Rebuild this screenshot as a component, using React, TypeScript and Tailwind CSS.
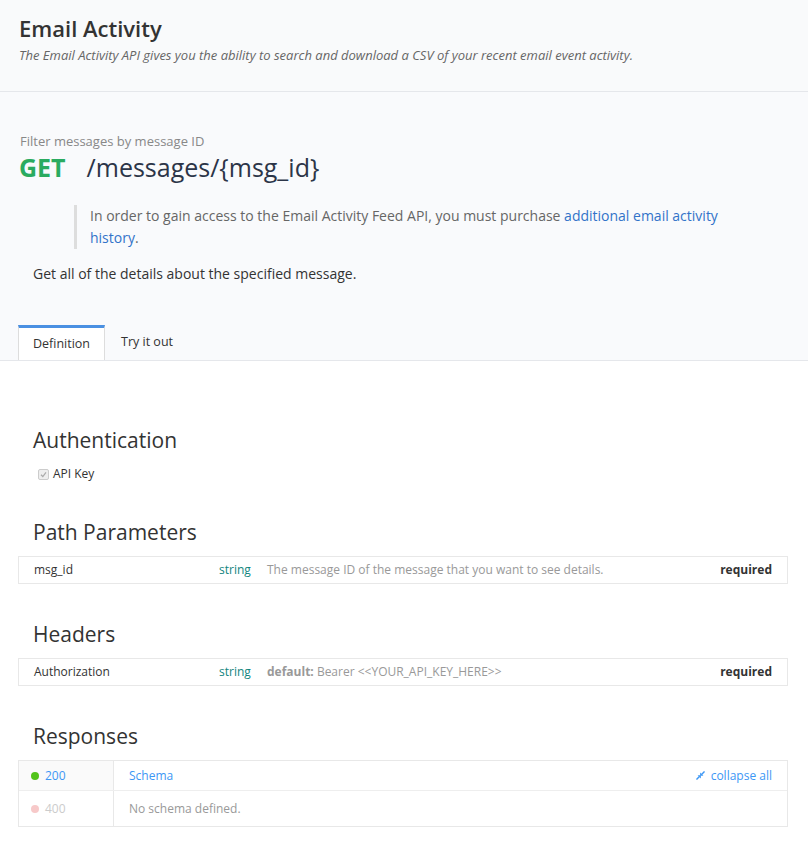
import React from "react";

const FONT = { fontFamily: '"Open Sans", "Noto Sans", sans-serif' };

function CollapseIcon() {
  return (
    <svg width="9" height="9" viewBox="0 0 10 10" className="inline-block">
      <path d="M9.5 0.5 L6.2 3.8" stroke="#3d97f5" strokeWidth="1.6" />
      <path d="M4.6 1.8 L4.6 5.4 L8.2 5.4 Z" fill="#3d97f5" />
      <path d="M0.5 9.5 L3.8 6.2" stroke="#3d97f5" strokeWidth="1.6" />
      <path d="M5.4 8.2 L5.4 4.6 L1.8 4.6 Z" fill="#3d97f5" />
    </svg>
  );
}

function ParamRow({ name, type, children }: { name: string; type: string; children: React.ReactNode }) {
  return (
    <div className="mr-[20px] ml-[18px] flex h-[28px] items-center border border-[#e8e8e8] pr-[15px] pl-[15px] text-[12px]">
      <span className="w-[185px] text-[#333]">{name}</span>
      <span className="w-[48px] text-[#12857e]">{type}</span>
      <span className="flex-1 text-[#999]">{children}</span>
      <span className="font-bold text-[#333]">required</span>
    </div>
  );
}

function SectionTitle({ children }: { children: React.ReactNode }) {
  return <h2 className="px-[33px] text-[21px] leading-[30px] font-normal text-[#333]">{children}</h2>;
}

export default function App() {
  return (
    <div className="min-h-[846px] bg-white" style={FONT}>
      <header className="h-[92px] border-b border-[#e5e7eb] bg-[#f9fafb] px-[19px] pt-[13px]">
        <h1 className="text-[22px] leading-[30px] font-semibold text-[#333]">Email Activity</h1>
        <p className="mt-[3px] text-[13px] leading-[18px] italic text-[#666]">
          The Email Activity API gives you the ability to search and download a CSV of your recent email event activity.
        </p>
      </header>

      <section className="border-b border-[#e5e7eb] bg-[#f9fafc] pt-[40px]">
        <div className="px-[19px]">
          <p className="pl-[1px] text-[13px] leading-[18px] text-[#888]">Filter messages by message ID</p>
          <div className="mt-[1px] flex items-center text-[25px] leading-[32px]">
            <span className="font-bold text-[#2aab60]">GET</span>
            <span className="ml-[21px] text-[#2c3548]">/messages/{"{msg_id}"}</span>
          </div>
        </div>
        <div className="px-[33px]">
          <blockquote className="mt-[22px] mr-[40px] ml-[41px] border-l-[3px] border-[#ddd] pl-[13px] text-[14px] leading-[22px] text-[#666]">
            In order to gain access to the Email Activity Feed API, you must purchase{" "}
            <a className="text-[#3273c9]">additional email activity history</a>.
          </blockquote>
          <p className="mt-[14px] text-[14px] leading-[22px] text-[#333]">Get all of the details about the specified message.</p>
        </div>
        <div className="mt-[40px] flex px-[18px] text-[12.5px]">
          <div className="-mb-px flex h-[35px] w-[87px] items-center justify-center border-x border-t-[3px] border-[#ddd] border-t-[#4a90e2] bg-white text-[#333]">
            Definition
          </div>
          <div className="flex h-[35px] items-center pl-[16px] text-[#333]">Try it out</div>
        </div>
      </section>

      <main className="pt-[64px] pb-[20px]">
        <SectionTitle>Authentication</SectionTitle>
        <label className="mt-[10px] flex items-center px-[38px] text-[12px] leading-[18px] text-[#333]">
          <span className="mr-[4px] flex h-[11px] w-[11px] items-center justify-center rounded-[2px] border border-[#ccc] bg-[#eee]">
            <svg width="7" height="7" viewBox="0 0 7 7">
              <path d="M1 3.8 L2.8 5.5 L6 1.3" stroke="#aaa" strokeWidth="1.2" fill="none" />
            </svg>
          </span>
          API Key
        </label>

        <div className="mt-[34px]">
          <SectionTitle>Path Parameters</SectionTitle>
          <div className="mt-[9px]">
            <ParamRow name="msg_id" type="string">
              The message ID of the message that you want to see details.
            </ParamRow>
          </div>
        </div>

        <div className="mt-[35px]">
          <SectionTitle>Headers</SectionTitle>
          <div className="mt-[9px]">
            <ParamRow name="Authorization" type="string">
              <span className="font-bold">default: </span>Bearer &lt;&lt;YOUR_API_KEY_HERE&gt;&gt;
            </ParamRow>
          </div>
        </div>

        <div className="mt-[35px]">
          <SectionTitle>Responses</SectionTitle>
          <div className="mt-[9px] mr-[20px] ml-[18px] border border-[#e8e8e8] text-[12px]">
            <div className="flex h-[30px] border-b border-[#eee]">
              <div className="flex w-[95px] items-center border-r border-[#e8e8e8] bg-[#fafafa] pl-[12px]">
                <span className="mr-[6px] h-[8px] w-[8px] rounded-full bg-[#52c41a]" />
                <span className="text-[#3d97f5]">200</span>
              </div>
              <div className="flex flex-1 items-center justify-between pr-[15px] pl-[15px]">
                <span className="text-[#3d97f5]">Schema</span>
                <span className="flex items-center gap-[6px] text-[#3d97f5]">
                  <CollapseIcon />
                  collapse all
                </span>
              </div>
            </div>
            <div className="flex h-[35px]">
              <div className="flex w-[95px] items-center border-r border-[#e8e8e8] pl-[12px]">
                <span className="mr-[6px] h-[8px] w-[8px] rounded-full bg-[#f7c9c9]" />
                <span className="text-[#ccc]">400</span>
              </div>
              <div className="flex flex-1 items-center pl-[15px] text-[#999]">No schema defined.</div>
            </div>
          </div>
        </div>
      </main>
    </div>
  );
}
